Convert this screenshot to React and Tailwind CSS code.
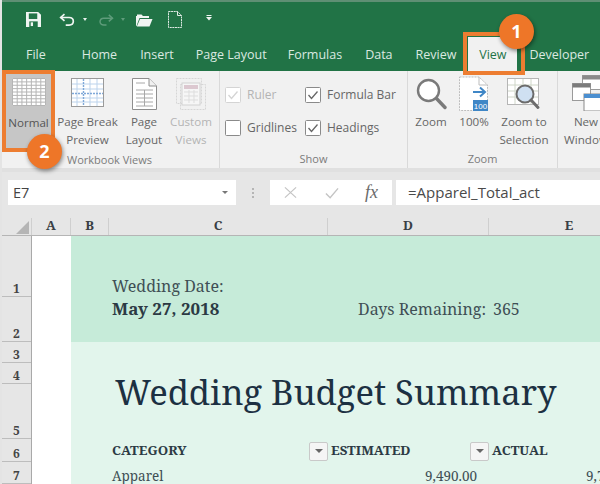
const ui = { fontFamily: '"Open Sans", "Noto Sans", sans-serif' };
const serif = { fontFamily: '"Noto Serif", "Liberation Serif", serif' };

function GridIcon({ cols = 7, rows = 8, w = 34, h = 28, stroke = '#b5b5b5', fill = '#fff' }) {
  const l = [];
  for (let i = 0; i <= cols; i++) l.push(<path key={'c' + i} d={`M${0.5 + (i * (w - 1)) / cols} 0.5V${h - 0.5}`} />);
  for (let i = 0; i <= rows; i++) l.push(<path key={'r' + i} d={`M0.5 ${0.5 + (i * (h - 1)) / rows}H${w - 0.5}`} />);
  return (
    <svg width={w} height={h} viewBox={`0 0 ${w} ${h}`} fill="none">
      <rect x="0" y="0" width={w} height={h} fill={fill} />
      <g stroke={stroke} strokeWidth="1">{l}</g>
    </svg>
  );
}

function PageBreakIcon() {
  return (
    <svg width="33" height="29" viewBox="0 0 33 29" fill="none">
      <rect x="0.5" y="0.5" width="32" height="28" fill="#fff" stroke="#9a9a9a" />
      <g stroke="#bcd3ec">
        <path d="M6 1V28M19 1V28M26 1V28M1 6H32M1 11H32M1 20H32M1 24H32" />
      </g>
      <path d="M12.5 1V28M1 15.5H32" stroke="#7fa8d8" strokeWidth="1.4" strokeDasharray="2 1" />
    </svg>
  );
}

function PageLayoutIcon() {
  return (
    <svg width="25" height="32" viewBox="0 0 25 32" fill="none">
      <path d="M0.5 0.5H17L24.5 8V31.5H0.5Z" fill="#fff" stroke="#8e8e8e" />
      <path d="M17 0.5V8H24.5" stroke="#8e8e8e" fill="#f1f1f1" />
      <g stroke="#a8a8a8">
        <path d="M4 5H13M4 12H21M4 16H21M4 20H21M4 24H21M12.5 12V28M4 28H21" />
      </g>
    </svg>
  );
}

function CustomViewsIcon() {
  return (
    <svg width="30" height="32" viewBox="0 0 30 32" fill="none">
      <rect x="0.5" y="0.5" width="25" height="25" stroke="#d6d6d6" strokeDasharray="2 1" />
      <rect x="4.5" y="6.5" width="25" height="25" stroke="#d6d6d6" strokeDasharray="2 1" />
      <rect x="6" y="5" width="18" height="22" fill="#f6f6f6" stroke="#d2d2d2" />
      <rect x="8" y="7" width="14" height="4" fill="#dcc8d0" />
      <g stroke="#dddddd">
        <path d="M8 14H22M8 18H22M8 22H22M13 12V25M18 12V25" />
      </g>
    </svg>
  );
}

function MagnifierIcon() {
  return (
    <svg width="31" height="32" viewBox="0 0 31 32" fill="none">
      <circle cx="12.5" cy="12.5" r="10.5" fill="#fff" stroke="#7a7a7a" strokeWidth="2.4" />
      <path d="M20.5 20.5L29 29.5" stroke="#7a7a7a" strokeWidth="3.4" strokeLinecap="round" />
    </svg>
  );
}

function HundredIcon() {
  return (
    <svg width="30" height="36" viewBox="0 0 30 36" fill="none" className="-mt-[2px]">
      <path d="M0.5 1H20L28.5 9V34.5H0.5Z" fill="#fff" stroke="#bdbdbd" strokeDasharray="2 1" />
      <path d="M20 1V9H28.5" stroke="#bdbdbd" />
      <path d="M14 16H25M21 11.5L26 16L21 20.5" stroke="#3f86c6" strokeWidth="2" />
      <rect x="14" y="24" width="15" height="11" fill="#3f86c6" />
      <text x="21.5" y="32.5" fontSize="8" fill="#fff" textAnchor="middle" fontFamily="Liberation Sans, sans-serif">100</text>
    </svg>
  );
}

function ZoomSelectionIcon() {
  return (
    <svg width="34" height="32" viewBox="0 0 34 32" fill="none">
      <rect x="0.5" y="0.5" width="31" height="26" fill="#fff" stroke="#b5b5b5" />
      <g stroke="#cfd6c8">
        <path d="M1 7H31M1 13H31M1 19H31M8 1V26M16 1V26M24 1V26" />
      </g>
      <circle cx="18" cy="16" r="8.5" fill="#cfe0f2" stroke="#6c6c6c" strokeWidth="2" />
      <path d="M24 22L31 29.5" stroke="#6c6c6c" strokeWidth="3" strokeLinecap="round" />
    </svg>
  );
}

function NewWindowIcon() {
  return (
    <svg width="33" height="36" viewBox="0 0 33 36" fill="none" className="ml-[4px] -mt-[3px]">
      <rect x="10.5" y="0.5" width="22" height="14" fill="#fff" stroke="#9a9a9a" />
      <rect x="10.5" y="0.5" width="22" height="4" fill="#8a8a8a" />
      <rect x="0.5" y="8.5" width="18" height="17" fill="#fff" stroke="#9a9a9a" />
      <rect x="0.5" y="8.5" width="18" height="4" fill="#7b7b7b" />
      <rect x="12" y="19" width="20" height="17" fill="#fff" stroke="#8a8a8a" />
      <rect x="12" y="19" width="20" height="4" fill="#4b8fd0" />
    </svg>
  );
}

function Check({ checked, disabled }) {
  const color = disabled ? '#d4d4d4' : '#8a8a8a';
  return (
    <svg width="17" height="17" viewBox="0 0 17 17" fill="none" className="shrink-0 mr-[5px]">
      <rect x="0.5" y="0.5" width="15" height="15" rx="1" fill="#fff" stroke={color} />
      {checked && <path d="M3.5 8L6.5 11.5L12.5 4.5" stroke={disabled ? '#d4d4d4' : '#666'} strokeWidth="1.3" />}
    </svg>
  );
}

function Big({ w, icon, lines, disabled }) {
  return (
    <div className={`flex flex-col items-center shrink-0 pt-[7px] ${w}`}>
      <div className="h-[34px] flex items-start justify-center">{icon}</div>
      <div className={`mt-px text-center text-[11.6px] leading-[18px] whitespace-nowrap ${disabled ? 'text-[#b4b4b4]' : 'text-[#666666]'}`}>
        {lines.map((t) => (<div key={t}>{t}</div>))}
      </div>
    </div>
  );
}

function Col({ children, w }) {
  return (
    <div className={`shrink-0 h-full flex items-end justify-center pb-px font-bold text-[13px] leading-[18px] text-[#3a3f45] border-r border-[#cfcfcf] ${w}`}>{children}</div>
  );
}

function Row({ h, n }) {
  return (
    <div className={`flex items-end justify-center border-b border-[#bdbdbd] font-bold text-[12px] leading-[15px] text-[#444] ${h}`} style={serif}>{n}</div>
  );
}

function Badge({ n, className }) {
  return (
    <div className={`absolute w-[35px] h-[35px] rounded-full bg-[#ee7628] text-white text-[18px] font-bold flex items-center justify-center shadow-[1px_2px_4px_rgba(0,0,0,0.45)] ${className}`} style={ui}>{n}</div>
  );
}

function Filter() {
  return (
    <div className="w-[19px] h-[19px] shrink-0 bg-[#f5f5f5] border border-[#c9c9c9] rounded-[2px] flex items-center justify-center">
      <div className="w-0 h-0 border-l-[4px] border-r-[4px] border-t-[4px] border-l-transparent border-r-transparent border-t-[#666]" />
    </div>
  );
}

export default function App() {
  return (
    <div className="relative w-[600px] h-[484px] overflow-hidden bg-[#e6e6e6] flex flex-col" style={ui}>
      {/* Green title + tabs */}
      <div className="h-[71px] shrink-0 bg-[#217346] border-t-2 border-[#5f8f74] flex flex-col">
        <div className="h-[35px] shrink-0 flex items-center pl-[26px]">
          <svg width="15" height="15" viewBox="0 0 16 16" className="mr-[18px]">
            <path d="M0 0H13L16 3V16H0Z" fill="#f0f5f2" />
            <rect x="3" y="1.5" width="9" height="6" fill="#217346" />
            <rect x="3.5" y="10" width="9" height="6" fill="#217346" />
            <rect x="5" y="11" width="2.5" height="4" fill="#f0f5f2" />
          </svg>
          <svg width="16" height="14" viewBox="0 0 19 15" fill="none" className="mr-[8px]">
            <path d="M2 4.5H12C15.5 4.5 17 6.5 17 9C17 11.5 15 13.5 12 13.5H8" stroke="#f0f5f2" strokeWidth="2" />
            <path d="M6.5 0.5L2 4.5L6.5 8.5" stroke="#f0f5f2" strokeWidth="2" />
          </svg>
          <div className="w-0 h-0 border-l-[2.5px] border-r-[2.5px] border-t-[3px] border-l-transparent border-r-transparent border-t-[#e8f0ec] mr-[12px]" />
          <svg width="15" height="12" viewBox="0 0 16 13" fill="none" className="mr-[7px]">
            <path d="M14.5 4.5H5C2.5 4.5 1 6 1 8.5C1 10.5 3 12 5 12H8" stroke="#5f9c7b" strokeWidth="1.6" />
            <path d="M10.5 1L14.5 4.5L10.5 8" stroke="#5f9c7b" strokeWidth="1.6" />
          </svg>
          <div className="w-0 h-0 border-l-[2.5px] border-r-[2.5px] border-t-[3px] border-l-transparent border-r-transparent border-t-[#5f9c7b] mr-[10px]" />
          <svg width="18" height="14" viewBox="0 0 18 14" className="mr-[15px]">
            <path d="M1 13V3H2V1.5H6.5L8 3H14V5H4.5L1.5 13Z" fill="#f0f5f2" />
            <path d="M5 6H17.5L14.5 13.5H1.8Z" fill="#f0f5f2" />
          </svg>
          <svg width="14" height="17" viewBox="0 0 14 17" fill="none" className="mr-[24px]">
            <path d="M0.5 0.5H9.5L13.5 4.5V16.5H0.5Z" stroke="#dfeae4" strokeDasharray="2 0.6" />
            <path d="M9.5 0.5V4.5H13.5" stroke="#dfeae4" />
          </svg>
          <svg width="6" height="6" viewBox="0 0 6 6" className="-mt-1">
            <rect x="0.5" y="0" width="5" height="1" fill="#f0f5f2" />
            <path d="M0 2H6L3 5.5Z" fill="#f0f5f2" />
          </svg>
        </div>
        <div className="flex h-[34px] text-[12.5px] leading-[18px] text-[#dbe9e1] pl-[26px] whitespace-nowrap">
          <div className="pt-[9px]">File</div>
          <div className="pt-[9px] ml-[36px]">Home</div>
          <div className="pt-[9px] ml-[23px]">Insert</div>
          <div className="pt-[9px] ml-[22px]">Page Layout</div>
          <div className="pt-[9px] ml-[21px]">Formulas</div>
          <div className="pt-[9px] ml-[23px]">Data</div>
          <div className="pt-[9px] ml-[23px]">Review</div>
          <div className="shrink-0 w-[49px] h-[34px] ml-[12px] pt-[9px] bg-[#f1f1f1] text-center text-[#217346]">View</div>
          <div className="pt-[9px] ml-[12px]">Developer</div>
        </div>
      </div>

      {/* Ribbon */}
      <div className="h-[98px] shrink-0 bg-[#f1f1f1] flex pl-[3px] border-b border-[#e0e0e0]">
        <div className="relative w-[217px] shrink-0 h-full flex border-r border-[#d9d9d9]">
          <div className="w-[51px] h-[81px] shrink-0 bg-[#c6c6c6] flex flex-col items-center pt-[7px]">
            <GridIcon />
            <div className="mt-[8px] text-[11.6px] leading-[18px] text-[#555]">Normal</div>
          </div>
          <Big w="w-[67px]" icon={<PageBreakIcon />} lines={['Page Break', 'Preview']} />
          <Big w="w-[46px]" icon={<PageLayoutIcon />} lines={['Page', 'Layout']} />
          <Big w="w-[48px]" disabled icon={<CustomViewsIcon />} lines={['Custom', 'Views']} />
          <div className="absolute -bottom-px left-[64px] text-[11px] leading-[18px] text-[#7b7b7b] whitespace-nowrap">Workbook Views</div>
        </div>
        <div className="w-[188px] shrink-0 h-full flex flex-col items-center border-r border-[#d9d9d9] text-[12px] leading-[18px] text-[#666]">
          <div className="grid grid-cols-[80px_90px] content-start gap-y-[15px] pt-[15px] pl-[5px] w-full h-[82px]">
            <div className="flex items-center text-[#b4b4b4]"><Check checked disabled />Ruler</div>
            <div className="flex items-center whitespace-nowrap"><Check checked />Formula Bar</div>
            <div className="flex items-center"><Check />Gridlines</div>
            <div className="flex items-center"><Check checked />Headings</div>
          </div>
          <div className="text-[11px] text-[#7b7b7b]">Show</div>
        </div>
        <div className="w-[150px] shrink-0 h-full border-r border-[#d9d9d9] flex flex-col">
          <div className="flex h-[82px]">
            <Big w="w-[46px]" icon={<MagnifierIcon />} lines={['Zoom']} />
            <Big w="w-[40px]" icon={<HundredIcon />} lines={['100%']} />
            <Big w="w-[60px]" icon={<ZoomSelectionIcon />} lines={['Zoom to', 'Selection']} />
          </div>
          <div className="text-[11px] leading-[18px] text-center text-[#7b7b7b]">Zoom</div>
        </div>
        <div className="flex-1 min-w-0">
          <Big w="w-[56px]" icon={<NewWindowIcon />} lines={['New', 'Window']} />
        </div>
      </div>

      {/* Formula bar */}
      <div className="h-[49px] shrink-0 flex items-start pt-[8px] pl-[8px] bg-[#e6e6e6] border-t-[3px] border-[#e0e0e0]">
        <div className="w-[228px] h-[25px] bg-white flex items-center justify-between pl-[5px] pr-[8px] text-[14.5px] text-[#444]">
          <span>E7</span>
          <div className="w-0 h-0 border-l-[3px] border-r-[3px] border-t-[3px] border-l-transparent border-r-transparent border-t-[#777]" />
        </div>
        <div className="w-[34px] h-[25px] flex flex-col items-center justify-center gap-[2px]">
          <span className="w-[2px] h-[2px] bg-[#b5b5b5]" />
          <span className="w-[2px] h-[2px] bg-[#b5b5b5]" />
          <span className="w-[2px] h-[2px] bg-[#b5b5b5]" />
        </div>
        <div className="w-[122px] h-[25px] bg-white flex items-center pl-[14px]">
          <svg width="13" height="13" viewBox="0 0 14 13" fill="none" className="mr-[28px]"><path d="M1 1L13 12M13 1L1 12" stroke="#c4c4c4" strokeWidth="1.3" /></svg>
          <svg width="14" height="12" viewBox="0 0 15 12" fill="none" className="mr-[26px]"><path d="M1 6.5L5.5 11L14 1" stroke="#c4c4c4" strokeWidth="1.5" /></svg>
          <span className="italic text-[18px] text-[#6a6a6a]" style={{ fontFamily: '"Liberation Serif", serif' }}>fx</span>
        </div>
        <div className="ml-[4px] flex-1 h-[25px] bg-white flex items-center pl-[12px] text-[15px] text-[#4a4a4a] whitespace-nowrap">=Apparel_Total_act</div>
      </div>

      {/* Column headers */}
      <div className="h-[18px] shrink-0 flex items-end pl-[2px] border-b border-[#b5b5b5]" style={serif}>
        <div className="w-[30px] h-full relative shrink-0 border-r border-[#cfcfcf]">
          <div className="absolute right-[2px] bottom-[1px] w-0 h-0 border-l-[13px] border-b-[13px] border-l-transparent border-b-[#b5b5b5]" />
        </div>
        <Col w="w-[39px]">A</Col>
        <Col w="w-[38px]">B</Col>
        <Col w="w-[219px]">C</Col>
        <Col w="w-[161px]">D</Col>
        <Col w="w-[161px]">E</Col>
      </div>

      {/* Sheet */}
      <div className="flex-1 flex pl-[2px] min-h-0">
        <div className="w-[30px] shrink-0 border-r border-[#a9a9a9] bg-[#e6e6e6]">
          <Row h="h-[61px]" n="1" />
          <Row h="h-[45px]" n="2" />
          <Row h="h-[21px]" n="3" />
          <Row h="h-[21px]" n="4" />
          <Row h="h-[55px]" n="5" />
          <Row h="h-[23px]" n="6" />
          <Row h="h-[22px]" n="7" />
        </div>
        <div className="w-[39px] shrink-0 bg-white" />
        <div className="flex-1 min-w-0 flex flex-col bg-[#e2f5ec] text-[#3f4f55]" style={serif}>
          <div className="h-[106px] shrink-0 bg-[#c6ebd9] pl-[41px] pt-[40px]">
            <div className="text-[16px] leading-[20px]">Wedding Date:</div>
            <div className="flex leading-[24px] mt-px">
              <div className="w-[246px] shrink-0 text-[17px] font-bold text-[#2c3a44] whitespace-nowrap">May 27, 2018</div>
              <div className="text-[16px] whitespace-nowrap">Days Remaining:<span className="ml-[7px]">365</span></div>
            </div>
          </div>
          <div className="h-[27px] shrink-0" />
          <div className="h-[69px] shrink-0 pl-[44px] text-[34.6px] leading-[46px] text-[#1c3042] whitespace-nowrap">Wedding Budget Summary</div>
          <div className="h-[26px] shrink-0 flex items-center text-[13.3px] font-bold text-[#2c3a44] whitespace-nowrap">
            <div className="w-[238px] shrink-0 pl-[41px]">CATEGORY</div>
            <div className="w-[161px] shrink-0 flex items-center gap-[3px]"><Filter /><span>ESTIMATED</span></div>
            <div className="flex items-center gap-[3px]"><Filter /><span>ACTUAL</span></div>
          </div>
          <div className="h-[24px] shrink-0 flex items-center text-[13.5px] whitespace-nowrap">
            <div className="w-[238px] shrink-0 pl-[41px]">Apparel</div>
            <div className="w-[168px] shrink-0 text-right">9,490.00</div>
            <div className="w-[161px] shrink-0 text-right">9,750.00</div>
          </div>
        </div>
      </div>

      {/* Callouts */}
      <div className="absolute left-0 top-0 bottom-0 w-[2px] bg-[#e4e4e4]" />
      <div className="absolute left-[463px] top-[32px] w-[62px] h-[43px] border-[4px] border-[#ed7d31]" />
      <div className="absolute left-[2px] top-[70px] w-[53px] h-[82px] border-[4px] border-[#ed7d31]" />
      <Badge n="1" className="left-[499px] top-[14px]" />
      <Badge n="2" className="left-[27px] top-[134px]" />
    </div>
  );
}
